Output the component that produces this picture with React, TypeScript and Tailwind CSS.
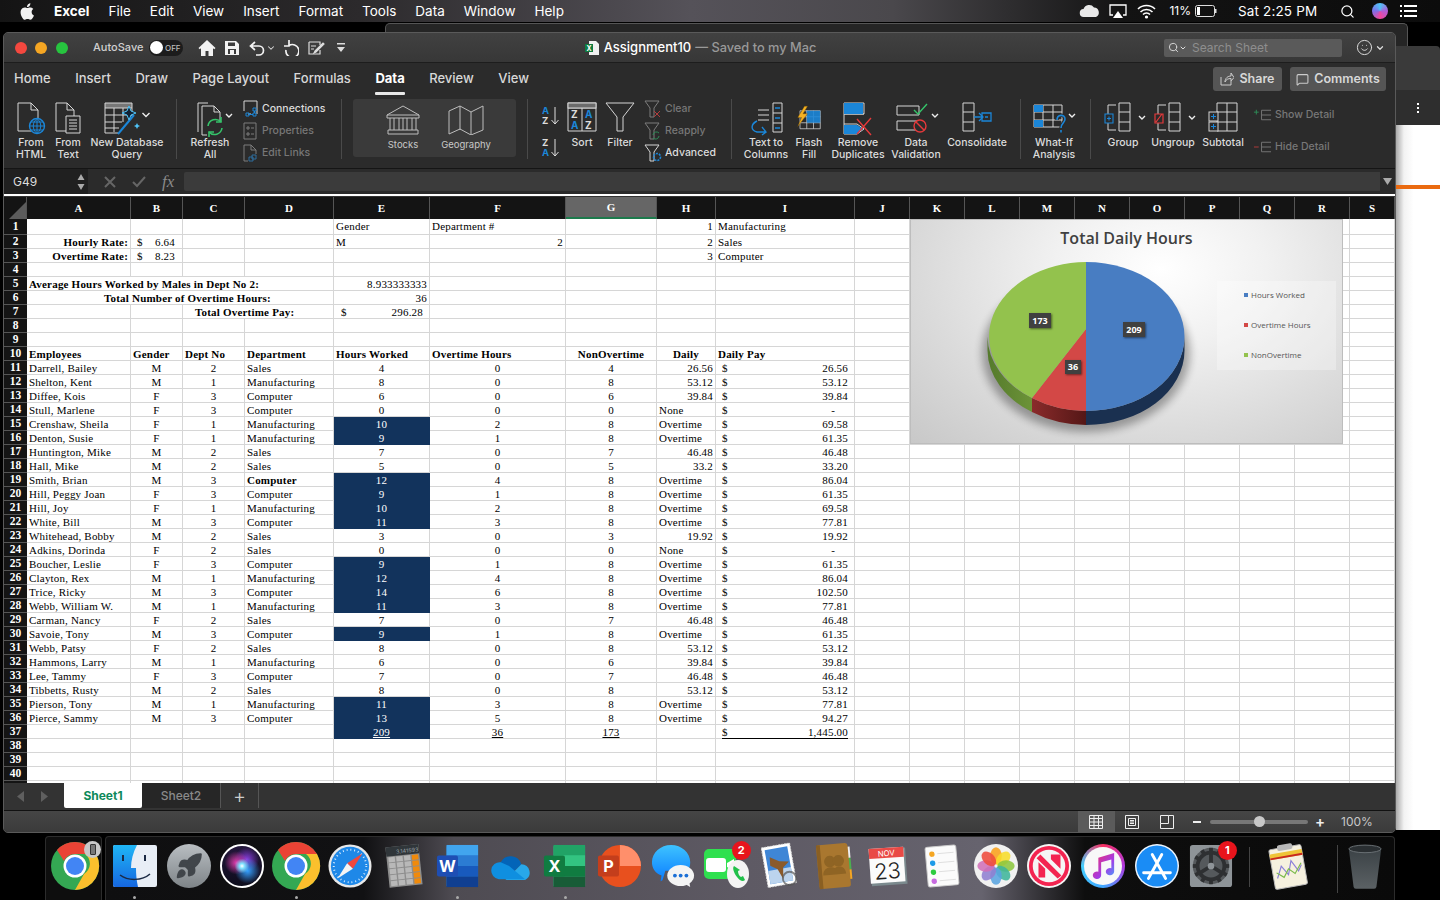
import React from "react";
import { ChevronDown, Search, Smile, MessageSquare, Rocket } from "lucide-react";

const GRID =
  "grid grid-rows-[minmax(0,1fr)] grid-cols-[23px_104px_52px_62px_89px_96px_136px_91px_59px_139px_55px_55px_55px_55px_55px_55px_55px_55px_55px_45px]";
const COL_NAMES = "ABCDEFGHIJKLMNOPQRS".split("");

type Cell = { t?: React.ReactNode; cls?: string; span?: number };

const money = (amount: string, cls = "pl-[6px] pr-[6px]") => (
  <div className={`flex justify-between ${cls}`}>
    <span>$</span>
    <span>{amount}</span>
  </div>
);

const employees: [string, string, number, string, number, number, number, string, string][] = [
  ["Darrell, Bailey", "M", 2, "Sales", 4, 0, 4, "26.56", "26.56"],
  ["Shelton, Kent", "M", 1, "Manufacturing", 8, 0, 8, "53.12", "53.12"],
  ["Diffee, Kois", "F", 3, "Computer", 6, 0, 6, "39.84", "39.84"],
  ["Stull, Marlene", "F", 3, "Computer", 0, 0, 0, "None", "-"],
  ["Crenshaw, Sheila", "F", 1, "Manufacturing", 10, 2, 8, "Overtime", "69.58"],
  ["Denton, Susie", "F", 1, "Manufacturing", 9, 1, 8, "Overtime", "61.35"],
  ["Huntington, Mike", "M", 2, "Sales", 7, 0, 7, "46.48", "46.48"],
  ["Hall, Mike", "M", 2, "Sales", 5, 0, 5, "33.2", "33.20"],
  ["Smith, Brian", "M", 3, "Computer", 12, 4, 8, "Overtime", "86.04"],
  ["Hill, Peggy Joan", "F", 3, "Computer", 9, 1, 8, "Overtime", "61.35"],
  ["Hill, Joy", "F", 1, "Manufacturing", 10, 2, 8, "Overtime", "69.58"],
  ["White, Bill", "M", 3, "Computer", 11, 3, 8, "Overtime", "77.81"],
  ["Whitehead, Bobby", "M", 2, "Sales", 3, 0, 3, "19.92", "19.92"],
  ["Adkins, Dorinda", "F", 2, "Sales", 0, 0, 0, "None", "-"],
  ["Boucher, Leslie", "F", 3, "Computer", 9, 1, 8, "Overtime", "61.35"],
  ["Clayton, Rex", "M", 1, "Manufacturing", 12, 4, 8, "Overtime", "86.04"],
  ["Trice, Ricky", "M", 3, "Computer", 14, 6, 8, "Overtime", "102.50"],
  ["Webb, William W.", "M", 1, "Manufacturing", 11, 3, 8, "Overtime", "77.81"],
  ["Carman, Nancy", "F", 2, "Sales", 7, 0, 7, "46.48", "46.48"],
  ["Savoie, Tony", "M", 3, "Computer", 9, 1, 8, "Overtime", "61.35"],
  ["Webb, Patsy", "F", 2, "Sales", 8, 0, 8, "53.12", "53.12"],
  ["Hammons, Larry", "M", 1, "Manufacturing", 6, 0, 6, "39.84", "39.84"],
  ["Lee, Tammy", "F", 3, "Computer", 7, 0, 7, "46.48", "46.48"],
  ["Tibbetts, Rusty", "M", 2, "Sales", 8, 0, 8, "53.12", "53.12"],
  ["Pierson, Tony", "M", 1, "Manufacturing", 11, 3, 8, "Overtime", "77.81"],
  ["Pierce, Sammy", "M", 3, "Computer", 13, 5, 8, "Overtime", "94.27"],
];

function rowCells(n: number): Record<number, Cell> {
  if (n === 1)
    return {
      4: { t: "Gender" },
      5: { t: "Department #" },
      7: { t: "1", cls: "text-right" },
      8: { t: "Manufacturing" },
    };
  if (n === 2)
    return {
      0: { t: "Hourly Rate:", cls: "text-right font-bold" },
      1: { t: money("6.64", "pl-[6px] pr-[7px]"), cls: "!px-0" },
      4: { t: "M" },
      5: { t: "2", cls: "text-right" },
      7: { t: "2", cls: "text-right" },
      8: { t: "Sales" },
    };
  if (n === 3)
    return {
      0: { t: "Overtime Rate:", cls: "text-right font-bold" },
      1: { t: money("8.23", "pl-[6px] pr-[7px]"), cls: "!px-0" },
      7: { t: "3", cls: "text-right" },
      8: { t: "Computer" },
    };
  if (n === 5)
    return {
      0: { t: "Average Hours Worked by Males in Dept No 2:", cls: "col-span-4 font-bold", span: 4 },
      4: { t: "8.933333333", cls: "text-right" },
    };
  if (n === 6)
    return {
      0: { t: "Total Number of Overtime Hours:", cls: "col-span-4 font-bold pl-[77px]", span: 4 },
      4: { t: "36", cls: "text-right" },
    };
  if (n === 7)
    return {
      2: { t: "Total Overtime Pay:", cls: "col-span-2 font-bold pl-[12px]", span: 2 },
      4: { t: money("296.28", "pl-[7px] pr-[6px]"), cls: "!px-0" },
    };
  if (n === 10)
    return {
      0: { t: "Employees", cls: "font-bold" },
      1: { t: "Gender", cls: "font-bold" },
      2: { t: "Dept No", cls: "font-bold" },
      3: { t: "Department", cls: "font-bold" },
      4: { t: "Hours Worked", cls: "font-bold" },
      5: { t: "Overtime Hours", cls: "font-bold" },
      6: { t: "NonOvertime", cls: "font-bold text-center" },
      7: { t: "Daily", cls: "font-bold text-center" },
      8: { t: "Daily Pay", cls: "font-bold" },
    };
  if (n >= 11 && n <= 36) {
    const e = employees[n - 11];
    const blue = e[4] > 8;
    const numeric = e[7] !== "None" && e[7] !== "Overtime";
    return {
      0: { t: e[0] },
      1: { t: e[1], cls: "text-center" },
      2: { t: e[2], cls: "text-center" },
      3: { t: e[3], cls: n === 19 ? "font-bold" : "" },
      4: { t: e[4], cls: blue ? "text-center !bg-[#12335c] !text-white !border-[#12335c]" : "text-center" },
      5: { t: e[5], cls: "text-center" },
      6: { t: e[6], cls: "text-center" },
      7: { t: e[7], cls: numeric ? "text-right" : "" },
      8: { t: money(e[8], e[8] === "-" ? "pl-[6px] pr-[19px]" : "pl-[6px] pr-[6px]"), cls: "!px-0" },
    };
  }
  if (n === 37)
    return {
      4: { t: <span className="underline">209</span>, cls: "text-center !bg-[#12335c] !text-white !border-[#12335c]" },
      5: { t: <span className="underline">36</span>, cls: "text-center" },
      6: { t: <span className="underline">173</span>, cls: "text-center" },
      8: {
        t: (
          <div className="ml-[6px] mr-[6px] flex justify-between border-b border-black leading-[12px]">
            <span>$</span>
            <span>1,445.00</span>
          </div>
        ),
        cls: "!px-0",
      },
    };
  return {};
}

function SheetRow({ n }: { n: number }) {
  const cells = rowCells(n);
  const out: React.ReactNode[] = [];
  for (let c = 0; c < 19; ) {
    const cell = cells[c];
    out.push(
      <div
        key={c}
        className={`overflow-visible whitespace-nowrap border-b border-r border-[#d6d6d6] bg-white px-[2px] pt-[1px] text-[11px] leading-[13px] tracking-[0.2px] text-black ${cell?.cls ?? ""}`}
      >
        {cell?.t}
      </div>
    );
    c += cell?.span ?? 1;
  }
  return (
    <div className={`${GRID} ${n === 1 ? "h-[16px]" : "h-[14px]"}`}>
      <div className="flex items-center justify-center border-b border-[#555] bg-[#141414] text-[11.5px] font-bold leading-none text-white">
        {n <= 40 ? n : null}
      </div>
      {out}
    </div>
  );
}

const LABEL =
  "absolute flex items-center justify-center bg-[#404040] font-['Open_Sans',sans-serif] text-[9px] font-bold text-white shadow-[1px_1px_2px_rgba(0,0,0,0.5)]";

function Chart() {
  return (
    <div className="absolute left-[906px] top-[22px] h-[225px] w-[433px] border border-[#bdbdbd] bg-[radial-gradient(ellipse_at_58%_22%,#ffffff_0%,#f1f1f1_30%,#dcdcdc_65%,#c8c8c8_100%)]">
      <div className="pt-[7px] text-center font-['Open_Sans',sans-serif] text-[16px] font-semibold leading-[22px] text-[#404040]">
        Total Daily Hours
      </div>
      <svg width="433" height="225" viewBox="0 0 433 225" className="absolute left-[-1px] top-[-1px]">
        <defs>
          <filter id="pieblur" x="-20%" y="-20%" width="140%" height="140%">
            <feGaussianBlur stdDeviation="4" />
          </filter>
          <linearGradient id="redside" x1="0" x2="1">
            <stop offset="0" stopColor="#8a2b2b" />
            <stop offset="1" stopColor="#541716" />
          </linearGradient>
          <linearGradient id="greenside" x1="0" x2="1">
            <stop offset="0" stopColor="#557a2c" />
            <stop offset="1" stopColor="#6c9338" />
          </linearGradient>
        </defs>
        <ellipse cx="176" cy="134" rx="104" ry="79" fill="#000" opacity="0.32" filter="url(#pieblur)" />
        <path d="M274.5 117.5A98.5 74.5 0 0 1 176 192V206A98.5 74.5 0 0 0 274.5 131.5Z" fill="#1a3050" />
        <path d="M176 192A98.5 74.5 0 0 1 122 179V193A98.5 74.5 0 0 0 176 206Z" fill="url(#redside)" />
        <path d="M122 179A98.5 74.5 0 0 1 77.5 117.5V131.5A98.5 74.5 0 0 0 122 193Z" fill="url(#greenside)" />
        <path d="M176 110L176 43A98.5 74.5 0 0 1 176 192Z" fill="#487dc2" />
        <path d="M176 110L176 192A98.5 74.5 0 0 1 122 179Z" fill="#d34846" />
        <path d="M176 110L122 179A98.5 74.5 0 0 1 176 43Z" fill="#93c24d" />
      </svg>
      <div className={`${LABEL} left-[118px] top-[93px] h-[15px] w-[22px]`}>173</div>
      <div className={`${LABEL} left-[212px] top-[102px] h-[15px] w-[22px]`}>209</div>
      <div className={`${LABEL} left-[154px] top-[140px] h-[14px] w-[16px]`}>36</div>
      <div className="absolute left-[306px] top-[61px] flex h-[89px] w-[119px] flex-col justify-between bg-white/30 pb-[9px] pl-[27px] pt-[8px] font-['Open_Sans',sans-serif] text-[8px] leading-[12px] text-[#555]">
        <div className="flex items-center gap-[3px]">
          <span className="h-[4px] w-[4px] bg-[#487dc2]" />
          Hours Worked
        </div>
        <div className="flex items-center gap-[3px]">
          <span className="h-[4px] w-[4px] bg-[#d34846]" />
          Overtime Hours
        </div>
        <div className="flex items-center gap-[3px]">
          <span className="h-[4px] w-[4px] bg-[#93c24d]" />
          NonOvertime
        </div>
      </div>
    </div>
  );
}

function Sheet() {
  const rows = Array.from({ length: 41 }, (_, i) => i + 1);
  return (
    <div className="relative min-h-0 flex-1 overflow-hidden bg-white font-['Liberation_Serif',serif]">
      <div className={`${GRID} h-[22px]`}>
        <div className="flex items-end justify-end border-r border-[#555] bg-[#141414]">
          <div className="h-0 w-0 border-b-[17px] border-l-[17px] border-b-[#5c5c5c] border-l-transparent" />
        </div>
        {COL_NAMES.map((c) => (
          <div
            key={c}
            className={`flex items-center justify-center border-r border-[#555] text-[11px] font-bold text-white ${
              c === "G" ? "border-b-2 border-b-[#1d7a4c] bg-[#666]" : "bg-[#141414]"
            }`}
          >
            {c}
          </div>
        ))}
      </div>
      {rows.map((n) => (
        <SheetRow key={n} n={n} />
      ))}
      <Chart />
    </div>
  );
}

/* ---------- ribbon icons ---------- */
const S = "#d6d6d6";
const DIM = "#7d7d7d";
const BLUE = "#1b86d8";

function IcoFromHtml() {
  return (
    <svg width="32" height="34" viewBox="0 0 32 34" fill="none">
      <path d="M16 29H3V1h13l7 7v9M16 1v7h7" stroke={S} />
      <circle cx="22" cy="24" r="7.5" stroke={BLUE} strokeWidth="1.4" />
      <path d="M14.5 24h15M22 16.5v15M16 20h12M16 28h12M22 16.5c-5 4-5 11 0 15M22 16.5c5 4 5 11 0 15" stroke={BLUE} />
    </svg>
  );
}
function IcoFromText() {
  return (
    <svg width="30" height="34" viewBox="0 0 30 34" fill="none">
      <path d="M13 29H3V1h11l7 7v6M14 1v7h7" stroke={S} />
      <path d="M13 14h14v17H13zM16 18h8M16 21h8M16 24h8M16 27h8" stroke={S} />
    </svg>
  );
}
function IcoDb() {
  return (
    <svg width="46" height="34" viewBox="0 0 46 34" fill="none">
      <path d="M1 1h27v5H1z" fill="#777" stroke={S} />
      <path d="M1 6v25h13M28 6v8M1 13h27M1 20h17M1 26h14M10 6v24M19 6v14" stroke={S} />
      <path d="M30 13L14 32" stroke={BLUE} strokeWidth="2" />
      <path d="M25 4l2 5 5 2-5 2-2 5-2-5-5-2 5-2z" stroke="#4fc3f7" fill="#123" />
      <path d="M33 21l1 2 2 1-2 1-1 2-1-2-2-1 2-1z" fill="#4fc3f7" />
      <path d="M38.5 11l3.5 3.5 3.5-3.5" stroke="#eee" strokeWidth="1.4" />
    </svg>
  );
}
function IcoRefresh() {
  return (
    <svg width="46" height="36" viewBox="0 0 46 36" fill="none">
      <path d="M11 30V1h10M15 33V4h12l6 6v10M27 4v6h6M15 33h5" stroke={S} />
      <path d="M21 24a7.5 7.5 0 0 1 13-4M35 26a7.5 7.5 0 0 1-13 4" stroke="#35c46a" strokeWidth="1.6" />
      <path d="M34 15v5h-5M22 35v-5h5" stroke="#35c46a" strokeWidth="1.6" />
      <path d="M39 12l3 3 3-3" stroke="#eee" strokeWidth="1.4" />
    </svg>
  );
}
function IcoStocks() {
  return (
    <svg width="36" height="30" viewBox="0 0 36 30" fill="none" stroke="#bdbdbd">
      <path d="M18 1L2 10h32zM2 10v3h32v-3M5 13v12M9 13v12M14 13v12M18 13v12M22 13v12M27 13v12M31 13v12M3 25h30v4H3z" />
    </svg>
  );
}
function IcoMap() {
  return (
    <svg width="36" height="30" viewBox="0 0 36 30" fill="none" stroke="#bdbdbd">
      <path d="M1 6l11-5 11 6 12-6v24l-12 5-11-6-11 5zM12 1v24M23 7v24" />
    </svg>
  );
}
function IcoAZ({ flip }: { flip?: boolean }) {
  return (
    <svg width="20" height="19" viewBox="0 0 20 19" fill="none">
      <text x="1" y="8" fontSize="9.5" fontWeight="700" fontFamily="Inter, sans-serif" fill={flip ? "#ddd" : BLUE}>
        {flip ? "Z" : "A"}
      </text>
      <text x="1" y="18" fontSize="9.5" fontWeight="700" fontFamily="Inter, sans-serif" fill={flip ? BLUE : "#ddd"}>
        {flip ? "A" : "Z"}
      </text>
      <path d="M14 1v17M10.5 14l3.5 4 3.5-4" stroke="#ddd" />
    </svg>
  );
}
function IcoSort() {
  return (
    <svg width="30" height="30" viewBox="0 0 30 30" fill="none">
      <path d="M1 1h28v28H1zM1 6h28M15 6v23" stroke={S} />
      <rect x="1" y="1" width="28" height="5" fill="#6b6b6b" stroke={S} />
      <g fontSize="10" fontWeight="700" fontFamily="Inter, sans-serif">
        <text x="4" y="16" fill="#ddd">Z</text>
        <text x="4" y="27" fill={BLUE}>A</text>
        <text x="18" y="16" fill={BLUE}>A</text>
        <text x="18" y="27" fill="#ddd">Z</text>
      </g>
    </svg>
  );
}
function IcoFilter() {
  return (
    <svg width="30" height="30" viewBox="0 0 30 30" fill="none">
      <path d="M1 1h28L18 15v14h-6V15z" stroke={S} />
    </svg>
  );
}
function SmallFunnel({ color, children }: { color: string; children?: React.ReactNode }) {
  return (
    <svg width="18" height="18" viewBox="0 0 18 18" fill="none">
      <path d="M1 1h14L10 8v9H6V8z" stroke={color} />
      {children}
    </svg>
  );
}
function IcoTextCols() {
  return (
    <svg width="34" height="34" viewBox="0 0 34 34" fill="none">
      <path d="M24 1h9v29h-9zM24 11h9M24 21h9" stroke={S} />
      <path d="M26 6h5M26 16h5M26 26h5" stroke={BLUE} strokeWidth="1.4" />
      <path d="M9 8h11M9 13h11M9 18h11" stroke={S} />
      <path d="M8 19c-6 3-7 9 0 11h8M13 25l4 5-4 3" stroke={BLUE} strokeWidth="1.4" />
    </svg>
  );
}
function IcoFlash() {
  return (
    <svg width="32" height="34" viewBox="0 0 32 34" fill="none">
      <path d="M4 6h27v24H4zM4 14h27M4 22h27M13 6v24M22 6v24" stroke={S} />
      <path d="M13 6h18v16H13z" fill={BLUE} opacity="0.9" />
      <path d="M10 0L1 15h5L1 27 14 10H8L14 0z" fill="#f5b122" stroke="#7a5200" strokeWidth="0.5" />
    </svg>
  );
}
function IcoRemoveDup() {
  return (
    <svg width="30" height="34" viewBox="0 0 30 34" fill="none">
      <path d="M1 1h20v11H1zM1 12h20M1 12v10M1 22h13l7 5-7 5H1z" stroke={S} />
      <path d="M1 1h19v11H1z" fill={BLUE} />
      <path d="M1 23h13l6 4-6 5H1z" fill={BLUE} />
      <path d="M14 32L28 16M14 17l14 16" stroke="#e5393b" strokeWidth="1.4" />
    </svg>
  );
}
function IcoValidation() {
  return (
    <svg width="46" height="34" viewBox="0 0 46 34" fill="none">
      <path d="M4 4h22v9H4zM4 19h22v9H4z" stroke={S} />
      <path d="M21 8l4 4 9-10" stroke="#35c46a" strokeWidth="1.4" />
      <circle cx="27" cy="24" r="6" fill="#2b2b2b" stroke="#e5393b" strokeWidth="1.4" />
      <path d="M23 20l8 8" stroke="#e5393b" strokeWidth="1.4" />
      <path d="M39 12l3 3 3-3" stroke="#eee" strokeWidth="1.4" />
    </svg>
  );
}
function IcoConsolidate() {
  return (
    <svg width="30" height="32" viewBox="0 0 30 32" fill="none">
      <path d="M1 1h11v28H1V1zM1 10h11M1 20h11" stroke={S} />
      <path d="M12 15h9M17 11l4 4-4 4" stroke={BLUE} strokeWidth="1.3" />
      <path d="M20 11h9v8h-9zM23 15h3" stroke={BLUE} strokeWidth="1.3" />
    </svg>
  );
}
function IcoWhatIf() {
  return (
    <svg width="46" height="34" viewBox="0 0 46 34" fill="none">
      <path d="M3 3h28v22H3zM3 10h28M3 18h28M12 3v22M22 3v22" stroke={S} />
      <path d="M3 3h9v7H3zM3 18h9v7H3z" fill={BLUE} />
      <path d="M26 18c0-6 8-6 8-1 0 4-4 4-4 9M30 28v2.5" stroke="#2b2b2b" strokeWidth="3.5" />
      <path d="M26 18c0-6 8-6 8-1 0 4-4 4-4 9M30 28v2.5" stroke={BLUE} strokeWidth="1.6" />
      <path d="M38 12l3 3 3-3" stroke="#eee" strokeWidth="1.4" />
    </svg>
  );
}
function IcoGroup({ red }: { red?: boolean }) {
  return (
    <svg width="46" height="32" viewBox="0 0 46 32" fill="none">
      <g transform="translate(5 0)">
        <path d="M11 3H3v9M3 21v7h8" stroke={S} />
        <path d="M14 1h11v28H14zM14 10h11M14 20h11" stroke={S} />
        {red ? (
          <path d="M0 12h8v9H0zM1 20l6-8" stroke="#e5393b" strokeWidth="1.2" />
        ) : (
          <path d="M0 12h8v9H0zM2 16.5h4M4 14.5v4" stroke={BLUE} strokeWidth="1.1" />
        )}
      </g>
      <path d="M39 14l3 3 3-3" stroke="#eee" strokeWidth="1.4" />
    </svg>
  );
}
function IcoSubtotal() {
  return (
    <svg width="30" height="32" viewBox="0 0 30 32" fill="none">
      <path d="M9 1h20v28H9zM9 10h20M9 20h20M19 1v28" stroke={S} />
      <rect x="1" y="10" width="9" height="9" fill="#2b2b2b" stroke={S} />
      <rect x="1" y="20" width="9" height="9" fill="#2b2b2b" stroke={S} />
      <path d="M3 14.5h5M5.5 12v5M3 24.5h5M5.5 22v5" stroke={BLUE} />
    </svg>
  );
}
function IcoDetail({ plus }: { plus?: boolean }) {
  return (
    <svg width="20" height="14" viewBox="0 0 20 14" fill="none">
      <path d="M9 2h10M9 7h10M9 12h10M9 2v10" stroke="#777" />
      <path d={plus ? "M1 4h5M3.5 1.5v5" : "M1 7h5"} stroke={plus ? "#2e8b57" : "#b23b3b"} />
    </svg>
  );
}

function RibbonBtn({ width, icon, label }: { width: string; icon: React.ReactNode; label: string[] }) {
  return (
    <div className={`flex shrink-0 flex-col items-center ${width}`}>
      <div className="flex h-[38px] w-full items-start justify-center pt-[3px]">{icon}</div>
      {label.map((l) => (
        <div key={l} className="whitespace-nowrap text-[10.5px] font-medium leading-[12px] text-[#dcdcdc]">
          {l}
        </div>
      ))}
    </div>
  );
}

function SideItem({ icon, label, dim }: { icon: React.ReactNode; label: string; dim?: boolean }) {
  return (
    <div className="flex h-[22px] items-center gap-[3px]">
      <div className="flex w-[19px] justify-center">{icon}</div>
      <span className={`whitespace-nowrap text-[10.5px] font-medium ${dim ? "text-[#777]" : "text-[#dcdcdc]"}`}>{label}</span>
    </div>
  );
}

const Sep = ({ cls }: { cls: string }) => <div className={`h-[60px] w-px shrink-0 self-start bg-[#4a4a4a] ${cls}`} />;

function Ribbon() {
  return (
    <div className="flex h-[72px] items-start bg-[#2b2b2b] pl-[8px] pt-[3px]">
      <RibbonBtn width="w-[38px]" icon={<IcoFromHtml />} label={["From", "HTML"]} />
      <RibbonBtn width="w-[36px]" icon={<IcoFromText />} label={["From", "Text"]} />
      <RibbonBtn width="w-[82px]" icon={<IcoDb />} label={["New Database", "Query"]} />
      <Sep cls="ml-[8px]" />
      <RibbonBtn width="w-[56px] ml-[5px]" icon={<IcoRefresh />} label={["Refresh", "All"]} />
      <div className="-mt-[1px] ml-[2px] flex w-[92px] shrink-0 flex-col">
        <SideItem
          label="Connections"
          icon={
            <svg width="16" height="18" viewBox="0 0 16 18" fill="none">
              <path d="M2 1h13v13" stroke={S} />
              <path d="M2 1v10M6 14h3" stroke={S} />
              <path d="M4 13h3v3H4zM11 8h3v3h-3zM11 13h3v3h-3zM7 14.5h4M12.5 11v2" stroke={BLUE} />
            </svg>
          }
        />
        <SideItem
          dim
          label="Properties"
          icon={
            <svg width="14" height="18" viewBox="0 0 14 18" fill="none" stroke={DIM}>
              <path d="M1 1h12v16H1zM4 5h2v2H4zM4 11h2v2H4zM8 6h3M8 12h3" />
            </svg>
          }
        />
        <SideItem
          dim
          label="Edit Links"
          icon={
            <svg width="14" height="18" viewBox="0 0 14 18" fill="none" stroke={DIM}>
              <path d="M1 17V1h7l5 5v4M8 1v5h5M1 17h4" />
              <path d="M6 13h4v4H6zM9 11h4v4H9z" stroke="#2f6f9f" />
            </svg>
          }
        />
      </div>
      <Sep cls="ml-[9px]" />
      <div className="ml-[11px] flex h-[58px] w-[163px] shrink-0 rounded-[3px] bg-[#3a3a3a] pt-[6px]">
        <div className="flex w-[100px] flex-col items-center text-[9.5px] leading-[12px] text-[#c8c8c8]">
          <div className="h-[34px]">
            <IcoStocks />
          </div>
          Stocks
        </div>
        <div className="-ml-[37px] flex w-[100px] flex-col items-center text-[9.5px] leading-[12px] text-[#c8c8c8]">
          <div className="h-[34px]">
            <IcoMap />
          </div>
          Geography
        </div>
      </div>
      <Sep cls="ml-[11px]" />
      <div className="ml-[13px] flex w-[20px] shrink-0 flex-col gap-[13px] pt-[7px]">
        <IcoAZ />
        <IcoAZ flip />
      </div>
      <RibbonBtn width="w-[42px]" icon={<IcoSort />} label={["Sort"]} />
      <RibbonBtn width="w-[34px]" icon={<IcoFilter />} label={["Filter"]} />
      <div className="-mt-[1px] ml-[6px] flex w-[86px] shrink-0 flex-col">
        <SideItem
          dim
          label="Clear"
          icon={
            <SmallFunnel color={DIM}>
              <path d="M10 11l6 6M16 11l-6 6" stroke="#b23b3b" />
            </SmallFunnel>
          }
        />
        <SideItem
          dim
          label="Reapply"
          icon={
            <SmallFunnel color={DIM}>
              <path d="M9 13a3.5 3.5 0 0 1 6-2M15 14a3.5 3.5 0 0 1-6 2" stroke="#2e8b57" />
            </SmallFunnel>
          }
        />
        <SideItem
          label="Advanced"
          icon={
            <SmallFunnel color={S}>
              <circle cx="13" cy="13" r="3.5" stroke={BLUE} strokeWidth="1.6" strokeDasharray="2 1" />
            </SmallFunnel>
          }
        />
      </div>
      <Sep cls="ml-[2px]" />
      <RibbonBtn width="w-[62px] ml-[3px]" icon={<IcoTextCols />} label={["Text to", "Columns"]} />
      <RibbonBtn width="w-[24px]" icon={<IcoFlash />} label={["Flash", "Fill"]} />
      <RibbonBtn width="w-[62px] ml-[6px]" icon={<IcoRemoveDup />} label={["Remove", "Duplicates"]} />
      <RibbonBtn width="w-[54px]" icon={<IcoValidation />} label={["Data", "Validation"]} />
      <RibbonBtn width="w-[66px] ml-[1px]" icon={<IcoConsolidate />} label={["Consolidate"]} />
      <Sep cls="ml-[10px]" />
      <RibbonBtn width="w-[66px]" icon={<IcoWhatIf />} label={["What-If", "Analysis"]} />
      <Sep cls="ml-[3px]" />
      <RibbonBtn width="w-[50px] ml-[7px]" icon={<IcoGroup />} label={["Group"]} />
      <RibbonBtn width="w-[50px]" icon={<IcoGroup red />} label={["Ungroup"]} />
      <RibbonBtn width="w-[50px]" icon={<IcoSubtotal />} label={["Subtotal"]} />
      <div className="ml-[5px] flex shrink-0 flex-col gap-[10px] pt-[5px]">
        <SideItem dim icon={<IcoDetail plus />} label="Show Detail" />
        <SideItem dim icon={<IcoDetail />} label="Hide Detail" />
      </div>
    </div>
  );
}

function TitleBar() {
  return (
    <div className="flex h-[30px] shrink-0 items-center border-b border-[#1d1d1d] bg-[linear-gradient(#414141,#373737)] font-['Inter',sans-serif]">
      <div className="flex flex-1 items-center pl-[11px]">
        <span className="h-[12px] w-[12px] rounded-full bg-[#f4483f]" />
        <span className="ml-[8px] h-[12px] w-[12px] rounded-full bg-[#f5a623]" />
        <span className="ml-[9px] h-[12px] w-[12px] rounded-full bg-[#27c43f]" />
        <span className="ml-[25px] w-[50px] whitespace-nowrap text-[11px] font-medium text-[#d0d0d0]">AutoSave</span>
        <div className="ml-[6px] flex h-[16px] w-[34px] items-center rounded-full bg-[#1c1c1c] pl-[1px]">
          <span className="h-[13px] w-[13px] rounded-full bg-white" />
          <span className="ml-[2px] text-[8px] font-medium text-[#bbb]">OFF</span>
        </div>
        <svg className="ml-[15px]" width="18" height="18" viewBox="0 0 18 18" fill="#f2f2f2">
          <path d="M9 1L0.5 9l1.200 1.300L3 9.200V17h4.500v-5h3v5H15V9.200l1.300 1.100L17.500 9z" />
        </svg>
        <svg className="ml-[8px]" width="16" height="16" viewBox="0 0 16 16" fill="#f2f2f2">
          <path fillRule="evenodd" d="M1 1h11l3 3v11H1zM4 2.5V6h7V2.5zM4 9v5h8V9z" />
          <rect x="6" y="10" width="4" height="4" />
        </svg>
        <svg className="ml-[9px]" width="16" height="16" viewBox="0 0 16 16" fill="none" stroke="#f2f2f2" strokeWidth="1.7">
          <path d="M6 2L1.5 6 6 10M2 6h8a4.5 4.5 0 0 1 0 9H7" />
        </svg>
        <ChevronDown className="ml-[1px] text-[#ddd]" size={10} strokeWidth={2.5} />
        <svg className="ml-[7px]" width="16" height="17" viewBox="0 0 16 17" fill="none" stroke="#f2f2f2" strokeWidth="1.7">
          <path d="M6 1v6H1M6 6.500A6.500 6.500 0 1 1 3 11" />
        </svg>
        <svg className="ml-[9px]" width="17" height="16" viewBox="0 0 17 16" fill="none" stroke="#dcdcdc" strokeWidth="1.2">
          <path d="M1 2h11v3M1 2v12h11v-4M3 6h5M3 9h3" />
          <path d="M7 11l8-8 1 1-8 8-2 1z" fill="#dcdcdc" />
        </svg>
        <svg className="ml-[12px]" width="8" height="10" viewBox="0 0 8 10" fill="#dcdcdc">
          <path d="M0 0h8v1.5H0zM0 4h8L4 9z" />
        </svg>
      </div>
      <div className="flex items-center whitespace-nowrap text-[13px] font-medium text-white">
        <svg className="mr-[5px]" width="14" height="14" viewBox="0 0 14 14">
          <path d="M4 0h7l3 3v11H4z" fill="#f1f1f1" />
          <path d="M0 3h8v8H0z" fill="#107c41" />
          <text x="1.6" y="9.6" fontSize="7" fontWeight="700" fontFamily="Inter, sans-serif" fill="#fff">X</text>
        </svg>
        Assignment10
        <span className="ml-[4px] text-[12.8px] text-[#999]">— Saved to my Mac</span>
      </div>
      <div className="flex flex-1 items-center justify-end pr-[9px]">
        <div className="flex h-[18px] w-[178px] items-center rounded-[2px] bg-[#5a5a5a] pl-[4px] text-[12px] text-[#8e8e8e]">
          <Search size={11} className="text-[#ddd]" />
          <ChevronDown size={8} strokeWidth={3} className="mr-[5px] text-[#ddd]" />
          Search Sheet
        </div>
        <Smile size={17} className="ml-[14px] text-[#ddd]" strokeWidth={1.4} />
        <ChevronDown size={10} strokeWidth={3} className="ml-[2px] mr-[1px] text-[#ddd]" />
      </div>
    </div>
  );
}

function TabRow() {
  const tabs = ["Home", "Insert", "Draw", "Page Layout", "Formulas", "Data", "Review", "View"];
  return (
    <div className="flex h-[33px] shrink-0 items-center bg-[#2b2b2b] pb-[1px] pl-[10px] font-['Inter',sans-serif] text-[13px] font-medium text-[#d8d8d8]">
      <div className="flex flex-1 gap-[24.5px]">
        {tabs.map((t) => (
          <div key={t} className={t === "Data" ? "relative font-bold text-white" : ""}>
            {t}
            {t === "Data" && <div className="absolute -bottom-[6px] left-0 h-[3px] w-full rounded-[1px] bg-[#e8e8e8]" />}
          </div>
        ))}
      </div>
      <div className="flex h-[24px] w-[69px] items-center justify-center gap-[5px] rounded-[3px] bg-[#555] text-[12.5px] font-semibold">
        <svg width="14" height="14" viewBox="0 0 14 14" fill="none" stroke="#ccc">
          <path d="M1 5v8h10V9M5 10c0-4 3-6 6-6V1l3 4.5L11 9V6.500c-3 0-5 1-6 3.500z" />
        </svg>
        Share
      </div>
      <div className="ml-[8px] mr-[9px] flex h-[24px] w-[96px] items-center justify-center gap-[5px] rounded-[3px] bg-[#555] text-[12.5px] font-semibold">
        <MessageSquare size={13} className="text-[#ccc]" />
        Comments
      </div>
    </div>
  );
}

function FormulaBar() {
  return (
    <div className="flex h-[26px] shrink-0 items-stretch border-t border-[#151515] bg-[#2b2b2b] font-['Inter',sans-serif]">
      <div className="flex w-[84px] items-center bg-[#202020] pl-[9px] text-[12px] text-[#ddd]">
        G49
        <svg className="ml-auto mr-[3px]" width="8" height="18" viewBox="0 0 8 18" fill="#aaa">
          <path d="M4 1l3.5 6h-7zM4 17l3.5-6h-7z" />
        </svg>
      </div>
      <div className="flex w-[96px] items-center gap-[16px] pl-[16px] text-[#666]">
        <svg width="12" height="12" viewBox="0 0 12 12" stroke="#666" strokeWidth="2">
          <path d="M1 1l10 10M11 1L1 11" />
        </svg>
        <svg width="14" height="12" viewBox="0 0 14 12" stroke="#666" strokeWidth="2" fill="none">
          <path d="M1 6l4 4 8-9" />
        </svg>
        <span className="font-['Liberation_Serif',serif] text-[17px] italic leading-none text-[#8a8a8a]">fx</span>
      </div>
      <div className="my-[3px] flex-1 rounded-l-[2px] bg-[#3b3b3b]" />
      <div className="flex w-[15px] items-center justify-center">
        <svg width="9" height="7" viewBox="0 0 9 7" fill="#aaa">
          <path d="M0 0h9L4.5 7z" />
        </svg>
      </div>
    </div>
  );
}

function SheetTabs() {
  return (
    <div className="flex h-[27px] shrink-0 bg-[#333] font-['Inter',sans-serif]">
      <div className="flex w-[60px] items-center gap-[17px] pl-[13px]">
        <svg width="7" height="11" viewBox="0 0 7 11" fill="#5f5f5f"><path d="M7 0v11L0 5.5z" /></svg>
        <svg width="7" height="11" viewBox="0 0 7 11" fill="#5f5f5f"><path d="M0 0v11l7-5.5z" /></svg>
      </div>
      <div className="flex h-[25px] w-[78px] items-center justify-center rounded-b-[2px] bg-white text-[12px] font-bold text-[#0e8a5a]">
        Sheet1
      </div>
      <div className="flex h-[25px] w-[79px] items-center justify-center border-r border-[#555] bg-[#262626] text-[12px] font-medium text-[#8a8a8a]">
        Sheet2
      </div>
      <div className="flex h-[25px] w-[38px] items-center justify-center border-r border-[#555] text-[20px] font-light leading-none text-[#cfcfcf]">
        +
      </div>
    </div>
  );
}

function StatusBar() {
  return (
    <div className="flex h-[22px] shrink-0 items-center justify-end border-t border-[#111] bg-[linear-gradient(#454545,#3b3b3b)] pr-[22px] font-['Inter',sans-serif]">
      <div className="flex h-full w-[37px] items-center justify-center bg-[#5b5b5b]">
        <svg width="14" height="14" viewBox="0 0 14 14" fill="none" stroke="#eee">
          <path d="M.5.5h13v13H.5zM.5 3.5h13M.5 7h13M.5 10.5h13M5 .5v13M9.5 .5v13" />
        </svg>
      </div>
      <svg className="ml-[10px]" width="14" height="14" viewBox="0 0 14 14" fill="none" stroke="#eee">
        <path d="M.5.5h13v13H.5zM3.500 3.500h7v7h-7zM5 5.500h4M5 7h4M5 8.500h4" />
      </svg>
      <svg className="ml-[21px]" width="14" height="14" viewBox="0 0 14 14" fill="none" stroke="#eee">
        <path d="M.5 .5h8v8H.5zM8.500 .5h5v13H.5V8.500" />
      </svg>
      <div className="ml-[19px] h-[2px] w-[8px] bg-[#eee]" />
      <div className="relative ml-[9px] flex h-[4px] w-[98px] rounded-full bg-[#777]">
        <span className="absolute left-[44px] top-[-4px] h-[11px] w-[11px] rounded-full bg-[#c8c8c8]" />
      </div>
      <span className="ml-[7px] text-[15px] font-semibold leading-none text-[#eee]">+</span>
      <span className="ml-[16px] w-[32px] text-[12px] text-[#c8c8c8]">100%</span>
    </div>
  );
}

/* ---------- dock icons ---------- */
function Chrome() {
  return (
    <svg width="50" height="50" viewBox="0 0 50 50">
      <circle cx="25" cy="25" r="24" fill="#34a853" />
      <path d="M25 1a24 24 0 0 1 21 12H25a12 12 0 0 0-11 7L7 9A24 24 0 0 1 25 1z" fill="#ea4335" />
      <path d="M46 13a24 24 0 0 1-21 36l9-16a12 12 0 0 0 1-20z" fill="#fbc02d" />
      <circle cx="25" cy="25" r="11.5" fill="#fff" />
      <circle cx="25" cy="25" r="9" fill="#4285f4" />
    </svg>
  );
}
function Finder() {
  return (
    <svg width="46" height="46" viewBox="0 0 46 46">
      <defs>
        <linearGradient id="fb" x1="0" y1="0" x2="0" y2="1">
          <stop offset="0" stopColor="#1fb6f6" />
          <stop offset="1" stopColor="#1667e0" />
        </linearGradient>
      </defs>
      <rect x="1" y="2" width="44" height="42" rx="2" fill="#e8eef6" />
      <path d="M3 2h22c-4 8-6 15-6 23h5c0 6 .5 12 2 19H3a2 2 0 0 1-2-2V4a2 2 0 0 1 2-2z" fill="url(#fb)" />
      <path d="M11 12v6M33 12v6" stroke="#1b2a44" strokeWidth="2" />
      <path d="M8 32c8 6 22 6 30-1" stroke="#1b2a44" strokeWidth="1.5" fill="none" />
    </svg>
  );
}
function Launchpad() {
  return (
    <div className="flex h-[44px] w-[44px] items-center justify-center rounded-full bg-[linear-gradient(#b9bec2,#7e8488)]">
      <Rocket size={28} fill="#41464b" stroke="#41464b" />
    </div>
  );
}
function Siri() {
  return (
    <div className="h-[44px] w-[44px] rounded-full border-2 border-white bg-[radial-gradient(circle_at_50%_50%,#ffffff_0%,#7fe3ff_9%,transparent_26%),radial-gradient(circle_at_36%_42%,#e23fb0_0%,transparent_34%),radial-gradient(circle_at_64%_62%,#35a0ff_0%,transparent_36%),radial-gradient(circle_at_62%_34%,#8a3fe0_0%,transparent_34%),linear-gradient(#23163a,#0d0d1c)]" />
  );
}
function Safari() {
  return (
    <svg width="44" height="44" viewBox="0 0 46 46">
      <circle cx="23" cy="23" r="22.5" fill="#e8e8e8" />
      <circle cx="23" cy="23" r="20" fill="#1e88e8" />
      <circle cx="23" cy="23" r="17" fill="none" stroke="#d7ecff" strokeWidth="2" strokeDasharray="1 3" />
      <path d="M36 10L20 20l6 6z" fill="#f0483e" />
      <path d="M10 36l16-10-6-6z" fill="#f4f4f4" />
    </svg>
  );
}
function Calculator() {
  const keys = [];
  for (let r = 0; r < 5; r++)
    for (let c = 0; c < 4; c++)
      keys.push(<rect key={`${r}${c}`} x={5 + c * 8.5} y={14 + r * 6.5} width="7" height="5.5" fill={c === 3 ? "#f08a0c" : "#b8b8b8"} />);
  return (
    <svg width="40" height="46" viewBox="0 0 42 50">
      <g transform="rotate(-6 20 25)">
        <rect x="3" y="3" width="36" height="44" fill="#8d8d8d" />
        <rect x="3" y="3" width="36" height="10" fill="#30363a" />
        <text x="14" y="11" fontSize="6" fill="#9ba3a8" fontFamily="Inter, sans-serif">3.141593</text>
        {keys}
      </g>
    </svg>
  );
}
function OfficeStack({ letter, colors, badge }: { letter: string; colors: string[]; badge: string }) {
  return (
    <svg width="44" height="44" viewBox="0 0 46 46">
      <rect x="11" y="1" width="33" height="44" rx="2" fill={colors[1]} />
      <rect x="11" y="1" width="33" height="11" fill={colors[0]} />
      <rect x="11" y="12" width="33" height="11" fill={colors[1]} />
      <rect x="11" y="23" width="33" height="11" fill={colors[2]} />
      <rect x="11" y="34" width="33" height="11" fill={colors[3]} />
      <rect x="1" y="12" width="22" height="22" rx="2" fill={badge} />
      <text x="12" y="29" textAnchor="middle" fontSize="17" fontWeight="700" fontFamily="Inter, sans-serif" fill="#fff">{letter}</text>
    </svg>
  );
}
function OneDrive() {
  return (
    <svg width="44" height="30" viewBox="0 0 46 32">
      <path d="M12 12a12 12 0 0 1 22 2l-17 16-12-10z" fill="#0364b8" />
      <path d="M34 14a9 9 0 0 1 4 17H17z" fill="#28a8ea" />
      <path d="M12 12a9 9 0 0 0-2 18h28L21 16z" fill="#0f8fe0" />
    </svg>
  );
}
function PowerPoint() {
  return (
    <svg width="44" height="44" viewBox="0 0 46 46">
      <circle cx="24" cy="23" r="22" fill="#e8501e" />
      <path d="M24 1a22 22 0 0 1 22 22H24z" fill="#ff8f6b" />
      <rect x="1" y="12" width="22" height="22" rx="2" fill="#c43e1c" />
      <text x="12" y="29" textAnchor="middle" fontSize="17" fontWeight="700" fontFamily="Inter, sans-serif" fill="#fff">P</text>
    </svg>
  );
}
function Messages() {
  return (
    <svg width="44" height="44" viewBox="0 0 46 46">
      <defs>
        <linearGradient id="mg" x1="0" y1="0" x2="0" y2="1">
          <stop offset="0" stopColor="#3ec3ff" />
          <stop offset="1" stopColor="#0a7cff" />
        </linearGradient>
      </defs>
      <path d="M21 1c11 0 20 8 20 18 0 4-1 7-3 9H15l-3 10-2 1 1-6C4 30 1 25 1 19 1 9 10 1 21 1z" fill="url(#mg)" />
      <ellipse cx="31" cy="33" rx="14" ry="11" fill="#f4f4f4" />
      <path d="M36 42l5 3-1-5z" fill="#f4f4f4" />
      <circle cx="25" cy="33" r="2" fill="#1b6fd6" />
      <circle cx="31" cy="33" r="2" fill="#1b6fd6" />
      <circle cx="37" cy="33" r="2" fill="#1b6fd6" />
    </svg>
  );
}
function Badge({ n, cls }: { n: string; cls: string }) {
  return (
    <span className={`absolute flex h-[19px] w-[19px] items-center justify-center rounded-full bg-[#e8141c] font-['Inter',sans-serif] text-[11px] font-bold text-white ${cls}`}>
      {n}
    </span>
  );
}
function FaceTime() {
  return (
    <div className="relative">
      <svg width="48" height="46" viewBox="0 0 48 46">
        <rect x="1" y="6" width="32" height="30" rx="5" fill="#2fe04f" />
        <path d="M6 15h14a3 3 0 0 1 3 3v8a3 3 0 0 1-3 3H6a3 3 0 0 1-3-3v-8a3 3 0 0 1 3-3zM24 20l7-4v12l-7-4z" fill="#fff" />
        <ellipse cx="35" cy="31" rx="11" ry="14" fill="#f4f4f4" />
        <path d="M31 23c-2 2 0 7 3 11s6 5 8 3l-2-4-2 1c-2-1-3-4-3-6l2-1z" fill="#21c04a" />
      </svg>
      <Badge n="2" cls="-top-[2px] left-[29px]" />
    </div>
  );
}
function Mail() {
  return (
    <svg width="44" height="48" viewBox="0 0 46 50">
      <g transform="rotate(-10 23 25)">
        <rect x="7" y="3" width="30" height="42" fill="#fff" stroke="#ddd" strokeDasharray="2 1" />
        <rect x="10" y="6" width="24" height="36" fill="#3f86d6" />
        <path d="M10 28h24v14H10z" fill="#bcd4ee" />
        <path d="M14 14l9 6 10 2-7 5-2 12-4-11-7-5z" fill="#8a5a2b" />
      </g>
      <circle cx="33" cy="38" r="7" fill="none" stroke="#555" strokeWidth="2" opacity="0.7" />
    </svg>
  );
}
function Contacts() {
  return (
    <svg width="42" height="48" viewBox="0 0 44 50">
      <g transform="rotate(-5 22 25)">
        <rect x="37" y="6" width="3" height="12" fill="#eee" />
        <rect x="37" y="18" width="3" height="12" fill="#4caf50" />
        <rect x="37" y="30" width="3" height="10" fill="#f5a623" />
        <rect x="5" y="2" width="33" height="46" rx="3" fill="#a9772f" />
        <path d="M5 2h4v46H5z" fill="#8a5f22" />
        <circle cx="18" cy="20" r="6" fill="#8f6424" />
        <circle cx="27" cy="20" r="6" fill="#8f6424" />
        <path d="M10 34c0-6 5-8 8-8s8 2 8 8zM20 34c0-6 4-8 7-8s7 2 7 8z" fill="#8f6424" />
      </g>
    </svg>
  );
}
function Calendar() {
  return (
    <svg width="42" height="44" viewBox="0 0 46 46">
      <g transform="rotate(-4 23 23)">
        <rect x="4" y="4" width="39" height="40" fill="#7b8a8e" />
        <rect x="3" y="3" width="38" height="38" fill="#fbfbfb" />
        <rect x="3" y="3" width="38" height="11" fill="#e94a46" />
        <text x="22" y="12" textAnchor="middle" fontSize="8.5" fontFamily="Inter, sans-serif" fill="#fff">NOV</text>
        <text x="22" y="37" textAnchor="middle" fontSize="24" fontWeight="300" fontFamily="Inter, sans-serif" fill="#222">23</text>
      </g>
    </svg>
  );
}
function Reminders() {
  const dots = ["#f5a623", "#1e9be8", "#2ecc40", "#c86be0"];
  return (
    <svg width="38" height="44" viewBox="0 0 42 48">
      <g transform="rotate(-5 21 24)">
        <rect x="4" y="2" width="34" height="44" rx="2" fill="#fbfbfb" stroke="#ccc" />
        {dots.map((d, i) => (
          <g key={d}>
            <circle cx="11" cy={10 + i * 10} r="3" fill={d} />
            <path d={`M17 ${10 + i * 10}h18`} stroke="#ddd" />
          </g>
        ))}
      </g>
    </svg>
  );
}
function Photos() {
  const petals = ["#f9a11b", "#f7dc2a", "#8cc63f", "#3fb59a", "#5aa4e0", "#8f7fd0", "#d070b8", "#ee4b3c"];
  return (
    <svg width="44" height="44" viewBox="0 0 46 46">
      <circle cx="23" cy="23" r="23" fill="#f1f1f1" />
      {petals.map((p, i) => (
        <ellipse key={p} cx="23" cy="12.5" rx="6" ry="9" fill={p} opacity="0.88" transform={`rotate(${i * 45} 23 23)`} />
      ))}
    </svg>
  );
}
function News() {
  return (
    <svg width="44" height="44" viewBox="0 0 46 46">
      <circle cx="23" cy="23" r="23" fill="#f5f5f5" />
      <circle cx="23" cy="23" r="21" fill="#f32450" />
      <circle cx="23" cy="23" r="17" fill="#f5f5f5" />
      <path d="M10 15l4-4 22 22-4 3zM12 19v16h7V26zM25 11h10v15l-10-10z" fill="#f32450" />
    </svg>
  );
}
function Music() {
  return (
    <div className="flex h-[44px] w-[44px] items-center justify-center rounded-full bg-[conic-gradient(#f72e5f,#b039e0,#3fa6ff,#45d0ff,#f72e5f)] p-[3px]">
      <div className="flex h-full w-full items-center justify-center rounded-full bg-[#f8f8f8]">
        <svg width="26" height="28" viewBox="0 0 28 30">
          <defs>
            <linearGradient id="note" x1="0" y1="0" x2="1" y2="1">
              <stop offset="0" stopColor="#f72e5f" />
              <stop offset="0.6" stopColor="#a43be6" />
              <stop offset="1" stopColor="#3fa6ff" />
            </linearGradient>
          </defs>
          <path d="M9 6l17-5v20a4.5 4 0 1 1-3-3.700V8L12 11v14a4.5 4 0 1 1-3-3.700z" fill="url(#note)" />
        </svg>
      </div>
    </div>
  );
}
function AppStore() {
  return (
    <svg width="44" height="44" viewBox="0 0 46 46">
      <circle cx="23" cy="23" r="23" fill="#eef6ff" />
      <circle cx="23" cy="23" r="21.5" fill="#1a8cf5" />
      <path d="M18 11l14 25M28 11L14 36M9 30h28" stroke="#fff" strokeWidth="3" strokeLinecap="round" />
    </svg>
  );
}
function SysPrefs() {
  const teeth = Array.from({ length: 12 }, (_, i) => i * 30);
  return (
    <div className="relative">
      <svg width="44" height="44" viewBox="0 0 46 46">
        <rect x="1" y="1" width="44" height="44" rx="3" fill="#8e9498" />
        <circle cx="23" cy="23" r="19" fill="#55595c" />
        {teeth.map((t) => (
          <rect key={t} x="21" y="4" width="4" height="6" fill="#2e3032" transform={`rotate(${t} 23 23)`} />
        ))}
        <circle cx="23" cy="23" r="14" fill="none" stroke="#2e3032" strokeWidth="4" />
        <path d="M23 23V10M23 23L12 30M23 23l11 7" stroke="#2e3032" strokeWidth="4" />
        <circle cx="23" cy="23" r="3.5" fill="#8e9498" />
      </svg>
      <Badge n="1" cls="-top-[3px] left-[29px]" />
    </div>
  );
}
function ActivityMon() {
  return (
    <svg width="44" height="48" viewBox="0 0 46 50">
      <g transform="rotate(-10 23 25)">
        <rect x="6" y="5" width="34" height="42" rx="2" fill="#f6f1df" stroke="#bbb" />
        <path d="M6 10h34v6H6z" fill="#efc437" />
        <path d="M6 14h34v2H6z" fill="#c9291f" />
        <rect x="15" y="2" width="16" height="6" rx="2" fill="#b8b8b8" />
        <path d="M10 36l6-12 6 10 5-14 6 12 4-6" fill="none" stroke="#8a7fd8" strokeWidth="1.2" />
        <path d="M10 30l7 6 6-8 6 6 8-10" fill="none" stroke="#79b94a" strokeWidth="1.2" />
      </g>
    </svg>
  );
}
function Trash() {
  return (
    <svg width="38" height="46" viewBox="0 0 40 48">
      <defs>
        <linearGradient id="trash" x1="0" y1="0" x2="0" y2="1">
          <stop offset="0" stopColor="#3b4246" />
          <stop offset="1" stopColor="#5b6164" />
        </linearGradient>
      </defs>
      <path d="M3 6h34l-5 40a3 3 0 0 1-3 2H11a3 3 0 0 1-3-2z" fill="url(#trash)" />
      <ellipse cx="20" cy="6" rx="17" ry="4" fill="#2a2f32" stroke="#6b7276" />
    </svg>
  );
}

function DockSlot({ children, dot }: { children: React.ReactNode; dot?: boolean }) {
  return (
    <div className="relative flex h-[64px] w-[53.8px] shrink-0 items-center justify-center pb-[7px]">
      {children}
      {dot && <span className="absolute bottom-[2px] h-[3px] w-[3px] rounded-full bg-[#aaa]" />}
    </div>
  );
}

function Dock() {
  return (
    <div className="absolute left-[45px] top-[836px] flex h-[64px] w-[1350px]">
      <div className="relative flex w-[57px] justify-center rounded-t-[4px] border-l border-r border-t border-[#2c2c2c] bg-[#0e0e0e] pl-[3px]">
        <DockSlot>
          <Chrome />
        </DockSlot>
        <span className="absolute left-[38px] top-[4px] flex h-[17px] w-[17px] items-center justify-center rounded-full bg-[#c8c8c8]">
          <span className="h-[11px] w-[6px] rounded-[1px] border border-[#333] bg-[#777]" />
        </span>
      </div>
      <div className="ml-[3px] flex flex-1 rounded-t-[4px] border-l border-r border-t border-[#2c2c2c] bg-[linear-gradient(90deg,#0f0f10_0%,#111113_20%,#4e4b52_27%,#5e5a64_50%,#66636e_68%,#0e0e0e_76%,#0a0a0a_100%)] pl-[2px]">
        <DockSlot dot><Finder /></DockSlot>
        <DockSlot><Launchpad /></DockSlot>
        <DockSlot><Siri /></DockSlot>
        <DockSlot dot><Chrome /></DockSlot>
        <DockSlot><Safari /></DockSlot>
        <DockSlot><Calculator /></DockSlot>
        <DockSlot dot>
          <OfficeStack letter="W" badge="#1e4eb4" colors={["#41a5ee", "#2b7cd3", "#185abd", "#103f91"]} />
        </DockSlot>
        <DockSlot><OneDrive /></DockSlot>
        <DockSlot dot>
          <OfficeStack letter="X" badge="#107c41" colors={["#21a366", "#33c481", "#107c41", "#185c37"]} />
        </DockSlot>
        <DockSlot><PowerPoint /></DockSlot>
        <DockSlot><Messages /></DockSlot>
        <DockSlot><FaceTime /></DockSlot>
        <DockSlot><Mail /></DockSlot>
        <DockSlot><Contacts /></DockSlot>
        <DockSlot><Calendar /></DockSlot>
        <DockSlot><Reminders /></DockSlot>
        <DockSlot><Photos /></DockSlot>
        <DockSlot><News /></DockSlot>
        <DockSlot><Music /></DockSlot>
        <DockSlot><AppStore /></DockSlot>
        <DockSlot><SysPrefs /></DockSlot>
        <div className="ml-[11px] mr-[11px] mt-[10px] h-[40px] w-px bg-[#444]" />
        <DockSlot><ActivityMon /></DockSlot>
        <div className="ml-[22px] mr-[1px] mt-[8px] h-[48px] w-px bg-[#444]" />
        <DockSlot><Trash /></DockSlot>
      </div>
    </div>
  );
}

function MenuBar() {
  const items = ["File", "Edit", "View", "Insert", "Format", "Tools", "Data", "Window", "Help"];
  return (
    <div className="flex h-[22px] items-center bg-[linear-gradient(90deg,#141414_0%,#2c2a2c_25%,#555259_48%,#4a484c_62%,#131313_78%,#0c0c0c_100%)] pl-[20px] font-['Inter',sans-serif] text-[13.5px] text-white">
      <svg width="14" height="17" viewBox="0 0 14 17" fill="#f2f2f2">
        <path d="M11.600 9c0-2 1.600-2.900 1.700-3-1-1.400-2.400-1.600-2.900-1.600-1.200-.1-2.400.7-3 .7s-1.600-.7-2.600-.7C3.400 4.400 2 5.200 1.300 6.400c-1.500 2.500-.4 6.300 1 8.300.7 1 1.500 2.100 2.600 2.100 1 0 1.400-.7 2.700-.7s1.600.7 2.700.7 1.800-1 2.500-2c.8-1.100 1.100-2.200 1.100-2.300 0 0-2.200-.8-2.300-3.500zM9.500 2.900c.6-.7 1-1.700.9-2.700-.8 0-1.900.6-2.500 1.300-.5.6-1 1.600-.9 2.600 1 .1 1.900-.5 2.500-1.200z" />
      </svg>
      <span className="ml-[20px] font-bold">Excel</span>
      <div className="ml-[19px] flex gap-[19px]">
        {items.map((m) => (
          <span key={m}>{m}</span>
        ))}
      </div>
      <div className="ml-auto flex items-center pr-[23px]">
        <svg width="22" height="14" viewBox="0 0 22 14" fill="#e8e8e8">
          <path d="M5 13a4 4 0 0 1-.5-8A6 6 0 0 1 15 3.5 5 5 0 0 1 17 13z" />
        </svg>
        <svg className="ml-[8px]" width="18" height="15" viewBox="0 0 18 15" fill="none">
          <path d="M4 11H1V1h16v10h-3" stroke="#fff" strokeWidth="1.3" />
          <path d="M9 7l5 7H4z" fill="#fff" />
        </svg>
        <svg className="ml-[10px]" width="19" height="15" viewBox="0 0 19 15" fill="none" stroke="#fff" strokeWidth="1.6">
          <path d="M1 5a12 12 0 0 1 17 0M3.5 8a8.500 8.500 0 0 1 12 0M6 10.500a5 5 0 0 1 7 0" />
          <circle cx="9.5" cy="13" r="0.8" fill="#fff" />
        </svg>
        <span className="ml-[13px] text-[12px]">11%</span>
        <svg className="ml-[4px]" width="22" height="12" viewBox="0 0 22 12" fill="none">
          <rect x=".5" y=".5" width="19" height="11" rx="2" stroke="#ddd" />
          <rect x="2" y="2" width="3" height="8" fill="#fff" />
          <rect x="20" y="4" width="1.5" height="4" fill="#ddd" />
        </svg>
        <span className="ml-[21px] w-[81px] whitespace-nowrap tracking-[0.15px]">Sat 2:25 PM</span>
        <Search className="ml-[21px]" size={15} />
        <div className="ml-[17px] h-[16px] w-[16px] rounded-full bg-[conic-gradient(#4fc3f7,#b15bd6,#f0479b,#7e6ee8,#4fc3f7)]" />
        <svg className="ml-[12px]" width="17" height="12" viewBox="0 0 17 12" fill="#fff">
          <path d="M0 0h2v2H0zM4 0h13v2H4zM0 5h2v2H0zM4 5h13v2H4zM0 10h2v2H0zM4 10h13v2H4z" />
        </svg>
      </div>
    </div>
  );
}

export default function App() {
  return (
    <div className="relative h-[900px] w-[1440px] overflow-hidden bg-black">
      <MenuBar />
      {/* windows behind excel */}
      <div className="absolute left-[385px] top-[23px] h-[30px] w-[1023px] rounded-t-[5px] border-l border-r border-t border-[#555] bg-[#252525]" />
      <div className="absolute left-[1396px] top-[46px] flex h-[784px] w-[44px] flex-col">
        <div className="h-[44px] rounded-tr-[4px] bg-[#3a3a3a]" />
        <div className="flex h-[35px] items-center justify-center bg-[#2e2e2e]">
          <div className="flex flex-col gap-[2px]">
            <span className="h-[2px] w-[2px] bg-white" />
            <span className="h-[2px] w-[2px] bg-white" />
            <span className="h-[2px] w-[2px] bg-white" />
          </div>
        </div>
        <div className="flex-1 bg-[linear-gradient(90deg,#aaa,#f2f2f2_18%,#fff_40%)] pt-[60px]">
          <div className="h-[4px] bg-[#ea6a10]" />
        </div>
      </div>

      <div className="absolute left-[3px] top-[32px] flex h-[801px] w-[1393px] flex-col overflow-hidden rounded-[5px] border border-[#5a5a5a] bg-[#2b2b2b]">
        <TitleBar />
        <TabRow />
        <div className="font-['Inter',sans-serif]">
          <Ribbon />
        </div>
        <FormulaBar />
        <div className="h-[3px] shrink-0 border-b border-[#333] bg-white" />
        <Sheet />
        <SheetTabs />
        <StatusBar />
      </div>
      <Dock />
    </div>
  );
}
